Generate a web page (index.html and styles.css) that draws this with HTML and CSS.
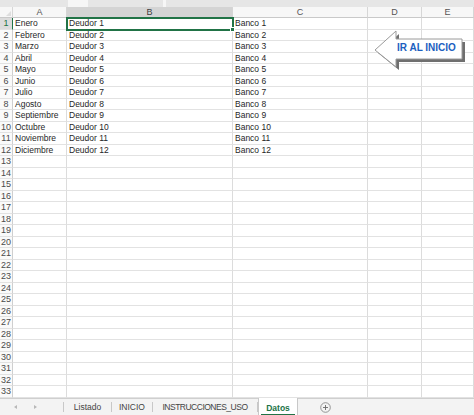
FILE: index.html
```html
<!DOCTYPE html>
<html>
<head>
<meta charset="utf-8">
<link rel="stylesheet" href="styles.css">
</head>
<body>
<div class="app">
  <div class="topbar">
    <div class="tb tb1"></div><div class="tb-gap tg1"></div><div class="tb tb2"></div><div class="tb-gap tg2"></div><div class="tb tb3"></div>
  </div>
  <div class="sheet">
    <div class="r hdr">
      <div class="corner"></div><div class="ch">A</div><div class="ch ch-sel">B</div><div class="ch">C</div><div class="ch">D</div><div class="ch">E</div>
    </div>
    <div class="r"><div class="h h-sel">1</div><div class="c">Enero</div><div class="c sel">Deudor 1</div><div class="c">Banco 1</div><div class="c"></div><div class="c"></div></div>
    <div class="r"><div class="h">2</div><div class="c">Febrero</div><div class="c">Deudor 2</div><div class="c">Banco 2</div><div class="c"></div><div class="c"></div></div>
    <div class="r"><div class="h">3</div><div class="c">Marzo</div><div class="c">Deudor 3</div><div class="c">Banco 3</div><div class="c"></div><div class="c"></div></div>
    <div class="r"><div class="h">4</div><div class="c">Abril</div><div class="c">Deudor 4</div><div class="c">Banco 4</div><div class="c"></div><div class="c"></div></div>
    <div class="r"><div class="h">5</div><div class="c">Mayo</div><div class="c">Deudor 5</div><div class="c">Banco 5</div><div class="c"></div><div class="c"></div></div>
    <div class="r"><div class="h">6</div><div class="c">Junio</div><div class="c">Deudor 6</div><div class="c">Banco 6</div><div class="c"></div><div class="c"></div></div>
    <div class="r"><div class="h">7</div><div class="c">Julio</div><div class="c">Deudor 7</div><div class="c">Banco 7</div><div class="c"></div><div class="c"></div></div>
    <div class="r"><div class="h">8</div><div class="c">Agosto</div><div class="c">Deudor 8</div><div class="c">Banco 8</div><div class="c"></div><div class="c"></div></div>
    <div class="r"><div class="h">9</div><div class="c">Septiembre</div><div class="c">Deudor 9</div><div class="c">Banco 9</div><div class="c"></div><div class="c"></div></div>
    <div class="r"><div class="h">10</div><div class="c">Octubre</div><div class="c">Deudor 10</div><div class="c">Banco 10</div><div class="c"></div><div class="c"></div></div>
    <div class="r"><div class="h">11</div><div class="c">Noviembre</div><div class="c">Deudor 11</div><div class="c">Banco 11</div><div class="c"></div><div class="c"></div></div>
    <div class="r"><div class="h">12</div><div class="c">Diciembre</div><div class="c">Deudor 12</div><div class="c">Banco 12</div><div class="c"></div><div class="c"></div></div>
    <div class="r"><div class="h">13</div><div class="c"></div><div class="c"></div><div class="c"></div><div class="c"></div><div class="c"></div></div>
    <div class="r"><div class="h">14</div><div class="c"></div><div class="c"></div><div class="c"></div><div class="c"></div><div class="c"></div></div>
    <div class="r"><div class="h">15</div><div class="c"></div><div class="c"></div><div class="c"></div><div class="c"></div><div class="c"></div></div>
    <div class="r"><div class="h">16</div><div class="c"></div><div class="c"></div><div class="c"></div><div class="c"></div><div class="c"></div></div>
    <div class="r"><div class="h">17</div><div class="c"></div><div class="c"></div><div class="c"></div><div class="c"></div><div class="c"></div></div>
    <div class="r"><div class="h">18</div><div class="c"></div><div class="c"></div><div class="c"></div><div class="c"></div><div class="c"></div></div>
    <div class="r"><div class="h">19</div><div class="c"></div><div class="c"></div><div class="c"></div><div class="c"></div><div class="c"></div></div>
    <div class="r"><div class="h">20</div><div class="c"></div><div class="c"></div><div class="c"></div><div class="c"></div><div class="c"></div></div>
    <div class="r"><div class="h">21</div><div class="c"></div><div class="c"></div><div class="c"></div><div class="c"></div><div class="c"></div></div>
    <div class="r"><div class="h">22</div><div class="c"></div><div class="c"></div><div class="c"></div><div class="c"></div><div class="c"></div></div>
    <div class="r"><div class="h">23</div><div class="c"></div><div class="c"></div><div class="c"></div><div class="c"></div><div class="c"></div></div>
    <div class="r"><div class="h">24</div><div class="c"></div><div class="c"></div><div class="c"></div><div class="c"></div><div class="c"></div></div>
    <div class="r"><div class="h">25</div><div class="c"></div><div class="c"></div><div class="c"></div><div class="c"></div><div class="c"></div></div>
    <div class="r"><div class="h">26</div><div class="c"></div><div class="c"></div><div class="c"></div><div class="c"></div><div class="c"></div></div>
    <div class="r"><div class="h">27</div><div class="c"></div><div class="c"></div><div class="c"></div><div class="c"></div><div class="c"></div></div>
    <div class="r"><div class="h">28</div><div class="c"></div><div class="c"></div><div class="c"></div><div class="c"></div><div class="c"></div></div>
    <div class="r"><div class="h">29</div><div class="c"></div><div class="c"></div><div class="c"></div><div class="c"></div><div class="c"></div></div>
    <div class="r"><div class="h">30</div><div class="c"></div><div class="c"></div><div class="c"></div><div class="c"></div><div class="c"></div></div>
    <div class="r"><div class="h">31</div><div class="c"></div><div class="c"></div><div class="c"></div><div class="c"></div><div class="c"></div></div>
    <div class="r"><div class="h">32</div><div class="c"></div><div class="c"></div><div class="c"></div><div class="c"></div><div class="c"></div></div>
    <div class="r"><div class="h">33</div><div class="c"></div><div class="c"></div><div class="c"></div><div class="c"></div><div class="c"></div></div>

    <svg class="shape" viewBox="370 26 104 48" width="104" height="48">
      <polygon points="378,53 399,34 399,42 465,42 465,62 399,62 399,70" fill="#6f6f6f"/>
      <polygon points="375,50 396,31 396,39 462,39 462,59 396,59 396,67" fill="#ffffff" stroke="#9a9a9a" stroke-width="1"/>
      <text x="397" y="50.5" class="shape-text">IR AL INICIO</text>
    </svg>
  </div>
  <div class="tabbar">
    <div class="nav">
      <svg width="6" height="6" viewBox="0 0 6 6"><polygon points="4,1 1,3 4,5" fill="#b8b8b8"/></svg>
      <svg width="6" height="6" viewBox="0 0 6 6"><polygon points="2,1 5,3 2,5" fill="#b8b8b8"/></svg>
    </div>
    <div class="tab t-listado">Listado</div>
    <div class="tab t-inicio">INICIO</div>
    <div class="tab t-instr">INSTRUCCIONES_USO</div>
    <div class="tab t-datos"><span>Datos</span></div>
    <div class="add">
      <svg width="11" height="11" viewBox="0 0 11 11"><circle cx="5.5" cy="5.5" r="4.8" fill="none" stroke="#8a8a8a" stroke-width="0.9"/><path d="M5.5 3v5M3 5.5h5" stroke="#6a6a6a" stroke-width="0.9"/></svg>
    </div>
  </div>
</div>
</body>
</html>
```

FILE: styles.css
```css
html, body {
  margin: 0;
  padding: 0;
  background: #ffffff;
}
body {
  width: 474px;
  height: 415px;
  overflow: hidden;
  font-family: "Liberation Sans", Arial, sans-serif;
}
.app {
  display: flex;
  flex-direction: column;
  width: 474px;
  height: 415px;
}
.topbar {
  display: flex;
  height: 7px;
  flex: none;
}
.tb { background: #e6e6e6; }
.tb1 { width: 68px; }
.tg1 { width: 20px; background: #f6f6f6; }
.tb2 { width: 75px; }
.tg2 { width: 3px; background: #f6f6f6; }
.tb3 { flex: 1; }

.sheet {
  position: relative;
  flex: none;
}
.r {
  display: grid;
  grid-template-columns: 13px 54px 166px 135px 54px 52px;
  height: 11px;
}
.r:nth-child(even) { height: 12px; }
.r > div {
  box-sizing: border-box;
  border-right: 1px solid #dcdcdc;
  border-bottom: 1px solid #e2e2e2;
  overflow: hidden;
  white-space: nowrap;
}
.hdr > div {
  background: #f7f7f7;
  border-bottom: 1px solid #c9c9c9;
  border-right: 1px solid #d6d6d6;
  font-size: 9px;
  line-height: 10px;
  text-align: center;
  color: #555;
}
.corner { position: relative; }
.corner::after {
  content: "";
  position: absolute;
  right: 1px;
  bottom: 1px;
  border-left: 5px solid transparent;
  border-bottom: 5px solid #dedede;
}
.hdr > .ch-sel {
  background: #d4d4d4;
  color: #3c3c3c;
  border-bottom: 1px solid #8fb59d;
}
.h {
  background: #fafafa;
  font-size: 9px;
  line-height: 11px;
  text-align: center;
  color: #4a4a4a;
  border-right-color: #cfcfcf !important;
}
.h-sel {
  background: #dcdcdc;
  color: #217346;
  border-right: 1px solid #217346 !important;
}
.c {
  font-size: 8.5px;
  line-height: 11px;
  padding-left: 2px;
  color: #262626;
}
.c.sel {
  position: relative;
  overflow: visible;
  outline: 2px solid #217346;
  outline-offset: -1px;
  z-index: 2;
}
.c.sel::after {
  content: "";
  position: absolute;
  right: -3px;
  bottom: -3px;
  width: 3px;
  height: 3px;
  background: #217346;
  border: 1px solid #ffffff;
}
.shape {
  position: absolute;
  left: 370px;
  top: 19px;
  z-index: 3;
}
.shape-text {
  font-family: "Liberation Sans", Arial, sans-serif;
  font-weight: bold;
  font-size: 10px;
  fill: #1d5fbf;
}

.tabbar {
  flex: 1;
  display: flex;
  align-items: stretch;
  background: #f3f3f3;
  border-top: 1px solid #cfcfcf;
  font-size: 8.5px;
  color: #444;
}
.nav {
  width: 64px;
  display: flex;
  align-items: center;
  gap: 13px;
  padding-left: 13px;
  box-sizing: border-box;
  border-right: 1px solid #c8c8c8;
  margin: 3px 0 4px;
}
.tab {
  display: flex;
  align-items: center;
  justify-content: center;
  box-sizing: border-box;
  border-right: 1px solid #c8c8c8;
  margin: 3px 0 4px;
}
.t-listado { width: 48px; }
.t-inicio { width: 41px; }
.t-instr { width: 105px; letter-spacing: -0.5px; }
.t-datos {
  width: 40px;
  margin: -2px 0 0;
  background: #ffffff;
  border-left: 1px solid #c8c8c8;
  border-right: 1px solid #c8c8c8;
  font-weight: bold;
  color: #217346;
  align-items: flex-start;
  padding-top: 6px;
}
.t-datos span {
  display: block;
  border-bottom: 2px solid #217346;
  padding: 0 5px 1px;
  line-height: 10px;
}
.add {
  display: flex;
  align-items: center;
  padding-left: 22px;
}
```
